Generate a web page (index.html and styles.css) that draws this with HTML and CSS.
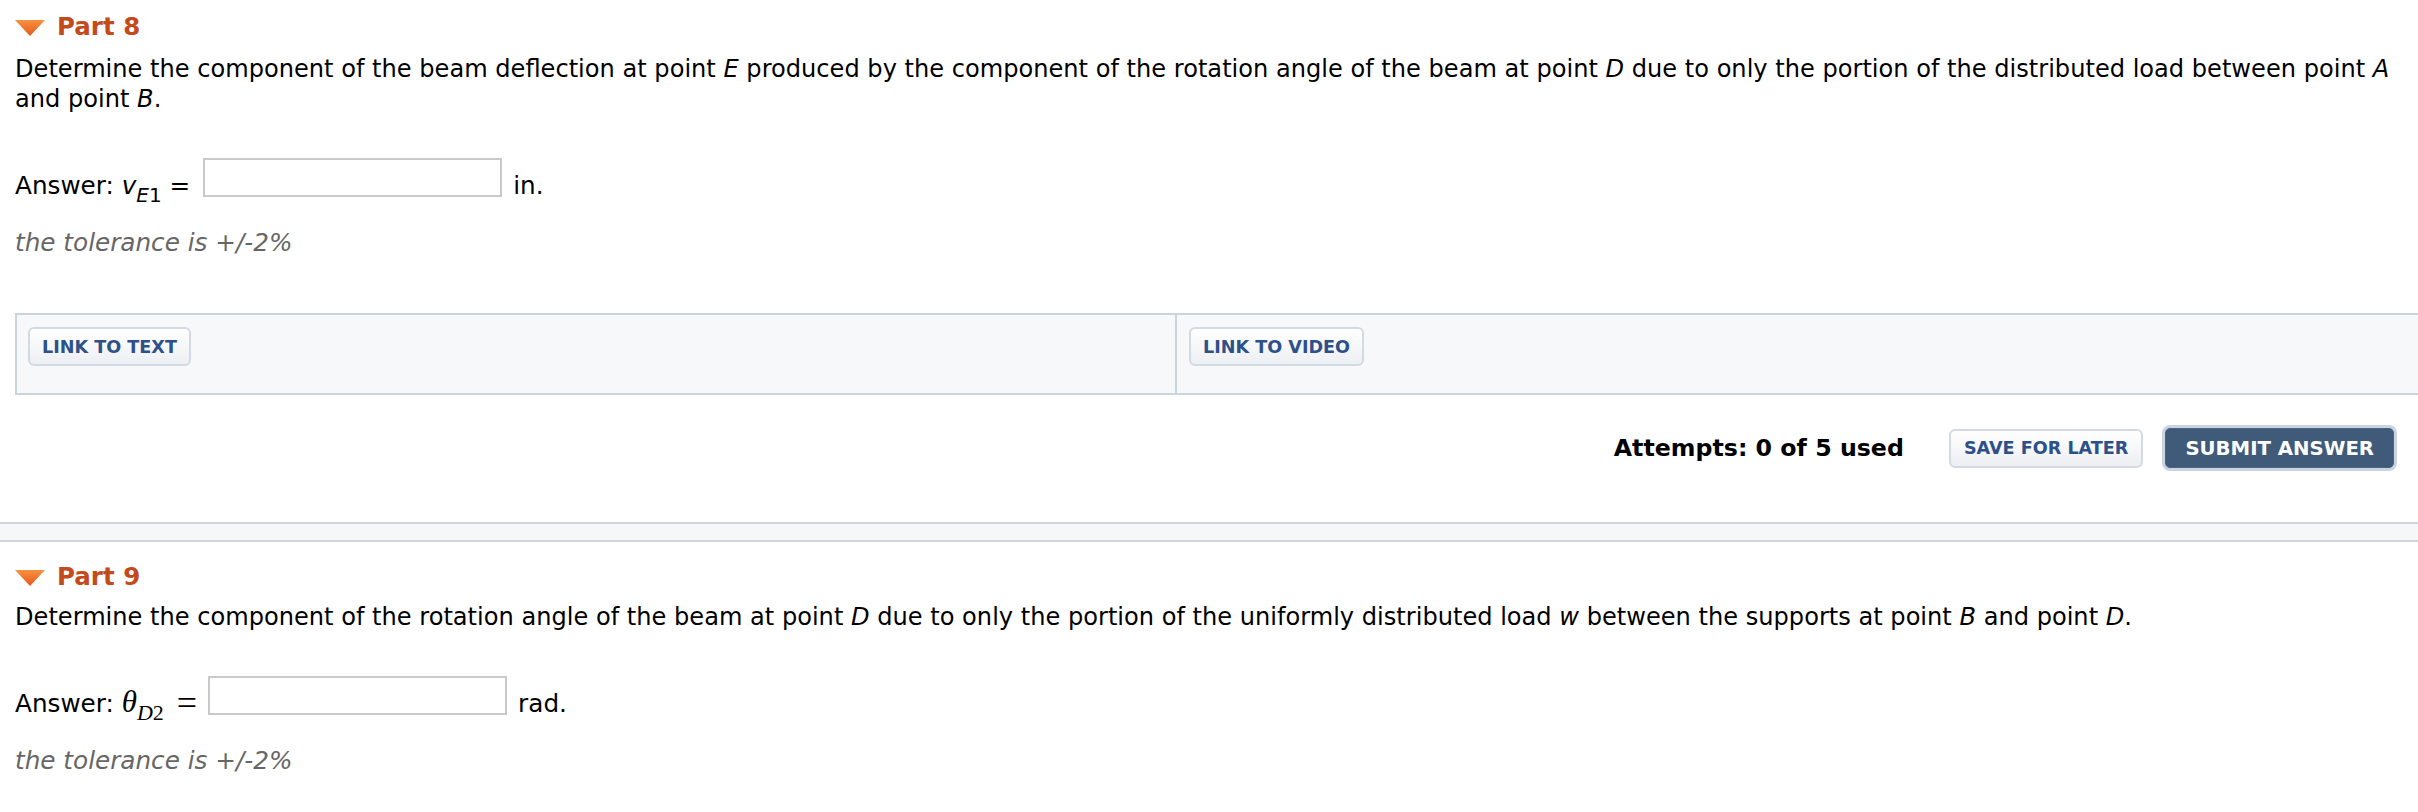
FILE: index.html
```html
<!DOCTYPE html>
<html>
<head>
<meta charset="utf-8">
<link rel="stylesheet" href="styles.css">
</head>
<body>
<section class="part">
  <h2 class="part-title">
    <svg class="caret" width="30" height="16" viewBox="0 0 30 16"><defs><linearGradient id="g1" x1="0" y1="0" x2="0" y2="1"><stop offset="0" stop-color="#f7913f"/><stop offset="1" stop-color="#e4591b"/></linearGradient></defs><polygon points="0,0 30,0 15,16" fill="url(#g1)"/></svg>
    <span>Part 8</span>
  </h2>
  <p class="question">Determine the component of the beam deflection at point <i>E</i> produced by the component of the rotation angle of the beam at point <i>D</i> due to only the portion of the distributed load between point <i>A</i> and point <i>B</i>.</p>
  <div class="answer">
    <span class="label">Answer: <span class="var"><i>v</i><sub><i>E</i>1</sub></span> =</span>
    <input class="field" type="text">
    <span class="unit">in.</span>
  </div>
  <p class="tolerance">the tolerance is +/-2%</p>
  <div class="linkbox">
    <div class="cell cell-left"><button class="btn">LINK TO TEXT</button></div>
    <div class="cell cell-right"><button class="btn">LINK TO VIDEO</button></div>
  </div>
  <div class="actions">
    <span class="attempts">Attempts: 0 of 5 used</span>
    <button class="btn btn-save">SAVE FOR LATER</button>
    <button class="btn btn-submit">SUBMIT ANSWER</button>
  </div>
</section>
<div class="separator"></div>
<section class="part part-next">
  <h2 class="part-title">
    <svg class="caret" width="30" height="16" viewBox="0 0 30 16"><defs><linearGradient id="g2" x1="0" y1="0" x2="0" y2="1"><stop offset="0" stop-color="#f7913f"/><stop offset="1" stop-color="#e4591b"/></linearGradient></defs><polygon points="0,0 30,0 15,16" fill="url(#g2)"/></svg>
    <span>Part 9</span>
  </h2>
  <p class="question">Determine the component of the rotation angle of the beam at point <i>D</i> due to only the portion of the uniformly distributed load <i>w</i> between the supports at point <i>B</i> and point <i>D</i>.</p>
  <div class="answer">
    <span class="label">Answer: <span class="math"><i>θ</i><sub><i>D</i>2</sub><span class="eq">=</span></span></span>
    <input class="field field-2" type="text">
    <span class="unit">rad.</span>
  </div>
  <p class="tolerance">the tolerance is +/-2%</p>
</section>
</body>
</html>
```
FILE: styles.css
```css
html, body {
  margin: 0;
  padding: 0;
  background: #ffffff;
}
body {
  font-family: "DejaVu Sans", Verdana, sans-serif;
  font-size: 24.7px;
  line-height: 30px;
  color: #000;
  overflow: hidden;
}
.part {
  padding: 0 0 0 15px;
}
.part-title {
  display: flex;
  align-items: center;
  gap: 12px;
  margin: 0;
  padding-top: 12px;
  height: 30px;
  font-size: 24.5px;
  font-weight: bold;
  color: #c44a1c;
}
.caret {
  display: block;
  margin-top: 2px;
}
.question {
  margin: 12px 0 0 0;
  font-size: 24.1px;
}
.answer {
  display: flex;
  align-items: flex-end;
  margin-top: 44px;
  height: 39px;
}
.label,
.unit {
  white-space: nowrap;
  margin-bottom: -4px;
}
.var sub {
  font-size: 20px;
  vertical-align: -8px;
  line-height: 0;
}
.math {
  font-family: "Liberation Serif", "Times New Roman", serif;
  font-size: 31px;
}
.math sub {
  font-size: 22px;
  vertical-align: -8px;
  line-height: 0;
}
.eq {
  display: inline-block;
  font-size: 36px;
  line-height: 0;
  margin-left: 13px;
  vertical-align: -3px;
}
.field {
  box-sizing: border-box;
  width: 299px;
  height: 39px;
  margin: 0 11px 0 13px;
  border: 2px solid #c9c9c9;
  background: #fff;
  padding: 0;
}
.field-2 {
  margin-left: 11px;
}
.tolerance {
  margin: 31px 0 0 0;
  font-style: italic;
  color: #666;
}
.linkbox {
  display: flex;
  margin-top: 55px;
  height: 78px;
  border: 2px solid #cbd3dc;
  border-right: none;
  background: #f7f8fa;
}
.cell {
  padding: 12px 11px;
}
.cell-left {
  width: 1136px;
  border-right: 2px solid #cbd3dc;
  padding-left: 11px;
}
.cell-right {
  flex: 1;
  padding-left: 12px;
}
.btn {
  box-sizing: border-box;
  height: 39px;
  padding: 0 12px;
  font-family: "DejaVu Sans", Verdana, sans-serif;
  font-weight: bold;
  font-size: 17.6px;
  color: #2d5089;
  border: 2px solid #d4dae2;
  border-radius: 6px;
  background: linear-gradient(#ffffff, #eceff3);
  cursor: pointer;
}
.actions {
  display: flex;
  align-items: center;
  justify-content: flex-end;
  margin-top: 32px;
  padding-right: 24px;
  height: 42px;
}
.attempts {
  font-weight: bold;
  font-size: 23.7px;
  margin-right: 45px;
}
.btn-save {
  margin-right: 22px;
  padding: 0 13px;
}
.btn-submit {
  height: 40px;
  font-size: 19.7px;
  color: #fff;
  background: #3f5b79;
  border: 1px solid #4a6481;
  border-radius: 5px;
  box-shadow: 0 0 0 3px #cbd4de;
  padding: 0 19px;
}
.separator {
  margin-top: 53px;
  height: 16px;
  border-top: 2px solid #cdd4dd;
  border-bottom: 2px solid #cdd4dd;
  background: #f6f7f9;
}
.part-next .part-title {
  padding-top: 20px;
}
.part-next .question {
  margin-top: 10px;
}
```
